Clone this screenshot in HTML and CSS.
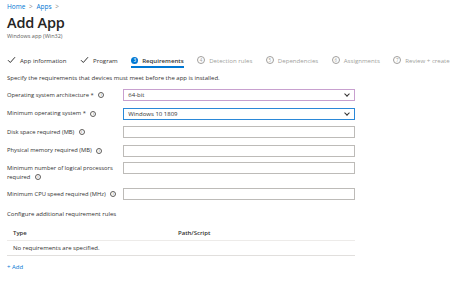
FILE: index.html
```html
<!DOCTYPE html>
<html>
<head>
  <title>Add App</title>
  <link rel="stylesheet" href="styles.css">
</head>
<body>
  <div class="page">
    <div class="crumbs">Home <span class="sep">&gt;</span> Apps <span class="sep">&gt;</span></div>
    <h1>Add App</h1>
    <div class="sub">Windows app (Win32)</div>

    <div class="steps">
      <div class="step done"><svg width="9" height="8" viewBox="0 0 9 8"><path d="M1 4.2 L3.3 6.5 L8 1.2" fill="none" stroke="#333" stroke-width="1"/></svg>App information</div>
      <div class="step done"><svg width="9" height="8" viewBox="0 0 9 8"><path d="M1 4.2 L3.3 6.5 L8 1.2" fill="none" stroke="#333" stroke-width="1"/></svg>Program</div>
      <div class="step active"><span class="num">3</span>Requirements</div>
      <div class="step todo"><span class="num">4</span>Detection rules</div>
      <div class="step todo"><span class="num">5</span>Dependencies</div>
      <div class="step todo"><span class="num">6</span>Assignments</div>
      <div class="step todo"><span class="num">7</span>Review + create</div>
    </div>

    <p class="intro">Specify the requirements that devices must meet before the app is installed.</p>

    <div class="form">
      <div class="row">
        <label>Operating system architecture * <span class="info">i</span></label>
        <div class="field select arch">64-bit<span class="chev"></span></div>
      </div>
      <div class="row">
        <label>Minimum operating system * <span class="info">i</span></label>
        <div class="field select focus">Windows 10 1809<span class="chev"></span></div>
      </div>
      <div class="row">
        <label>Disk space required (MB) <span class="info">i</span></label>
        <div class="field"></div>
      </div>
      <div class="row">
        <label>Physical memory required (MB) <span class="info">i</span></label>
        <div class="field"></div>
      </div>
      <div class="row tall">
        <label>Minimum number of logical processors required <span class="info">i</span></label>
        <div class="field"></div>
      </div>
      <div class="row">
        <label>Minimum CPU speed required (MHz) <span class="info">i</span></label>
        <div class="field"></div>
      </div>
    </div>

    <p class="intro rules">Configure additional requirement rules</p>

    <div class="table">
      <div class="thead"><span class="c1">Type</span><span class="c2">Path/Script</span></div>
      <div class="trow">No requirements are specified.</div>
    </div>

    <div class="add">+ Add</div>
  </div>
</body>
</html>
```

FILE: styles.css
```css
body {
  margin: 0;
  background-color: #ffffff;
  font-family: "Open Sans", "Noto Sans", sans-serif;
  color: #323130;
}

.page {
  padding: 2px 7px 0 7px;
  width: 348px;
}

.crumbs {
  font-size: 6.5px;
  color: #0078d4;
  height: 10px;
  line-height: 10px;
}

.crumbs .sep {
  color: #8a8886;
  margin: 0 2px;
}

h1 {
  margin: 0;
  font-size: 14.5px;
  font-weight: 600;
  line-height: 21px;
  color: #252423;
  letter-spacing: -0.2px;
}

.sub {
  font-size: 5.5px;
  color: #605e5c;
  line-height: 7px;
}

.steps {
  display: flex;
  margin-top: 14px;
  width: 466px;
  height: 14px;
}

.step {
  display: flex;
  align-items: center;
  font-size: 6.1px;
  margin-right: 13.5px;
  height: 12px;
  white-space: nowrap;
}

.step svg,
.step .num {
  margin-right: 4px;
}

.step.active {
  border-bottom: 2px solid #0078d4;
  font-weight: 600;
}

.num {
  display: inline-block;
  width: 6px;
  height: 6px;
  border-radius: 50%;
  font-size: 4.5px;
  line-height: 6px;
  text-align: center;
}

.active .num {
  background-color: #0078d4;
  color: #ffffff;
  width: 7px;
  height: 7px;
  line-height: 7px;
}

.todo {
  color: #a19f9d;
}

.todo .num {
  border: 0.7px solid #a19f9d;
}

.intro {
  margin: 4px 0 0 0;
  font-size: 6px;
  line-height: 12px;
}

.form {
  margin-top: 2px;
}

.row {
  display: flex;
  align-items: center;
  height: 18.5px;
}

.row.tall {
  height: 23px;
  align-items: flex-start;
  padding-top: 2px;
}

.row label {
  width: 117px;
  font-size: 5.8px;
  line-height: 9px;
}

.tall label {
  margin-top: 2px;
}

.info {
  display: inline-block;
  width: 4px;
  height: 4px;
  border: 0.6px solid #605e5c;
  border-radius: 50%;
  font-size: 3.5px;
  line-height: 4px;
  text-align: center;
  margin-left: 3px;
  vertical-align: middle;
}

.field {
  position: relative;
  width: 227px;
  height: 10px;
  border: 1px solid #bdbbb8;
  font-size: 6px;
  line-height: 10px;
  padding-left: 4px;
  box-sizing: content-box;
}

.field.arch {
  border-color: #c8a0cf;
}

.field.focus {
  border-color: #2b88d8;
}

.chev {
  position: absolute;
  right: 5px;
  top: 2px;
  width: 3px;
  height: 3px;
  border-right: 0.8px solid #323130;
  border-bottom: 0.8px solid #323130;
  transform: rotate(45deg);
}

.rules {
  margin-top: 4px;
}

.table {
  margin-top: 6px;
  width: 348px;
  font-size: 6px;
}

.thead {
  display: flex;
  padding: 0 6px;
  height: 14px;
  line-height: 14px;
  border-bottom: 1px solid #edebe9;
  font-weight: 600;
}

.thead .c1 {
  width: 165px;
}

.trow {
  padding: 0 6px;
  height: 14px;
  line-height: 14px;
  border-bottom: 1px solid #e1dfdd;
}

.add {
  margin-top: 6px;
  font-size: 6px;
  line-height: 10px;
  color: #0078d4;
}
```
